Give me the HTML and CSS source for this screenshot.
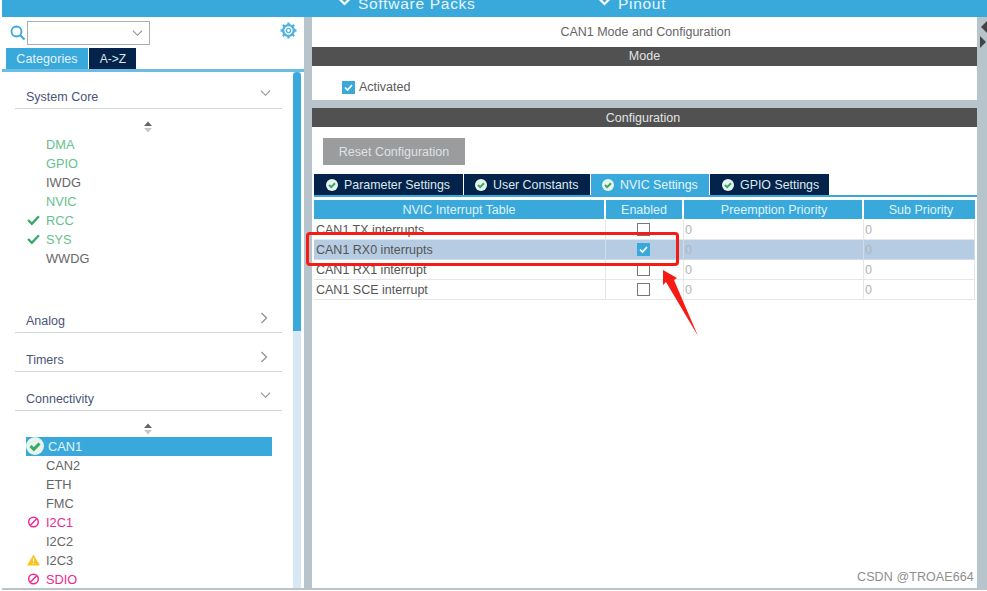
FILE: index.html
```html
<!DOCTYPE html>
<html lang="en">
<head>
  <meta charset="UTF-8">
  <meta name="viewport" content="width=device-width, initial-scale=1.0">
  <title>CAN1 Mode and Configuration</title>
  <link rel="stylesheet" href="styles.css">
</head>
<body>
  <svg class="defs" width="0" height="0">
    <symbol id="chev-down" viewBox="0 0 12 8"><path d="M1 1.500l5 5 5-5" fill="none" stroke="#8a8f94" stroke-width="1.200"/></symbol>
    <symbol id="chev-right" viewBox="0 0 8 12"><path d="M1.500 1l5 5-5 5" fill="none" stroke="#8a8f94" stroke-width="1.200"/></symbol>
    <symbol id="chev-top" viewBox="0 0 14 10"><path d="M1.500 1.500L7 7l5.500-5.500" fill="none" stroke="#fff" stroke-width="2.200"/></symbol>
    <symbol id="caret" viewBox="0 0 10 12"><path d="M5 0l4 4.500H1z" fill="#666"/><path d="M1 6.500h8L5 11z" fill="#c4c8cb"/></symbol>
    <symbol id="ok" viewBox="0 0 12 12"><circle cx="6" cy="6" r="6" fill="#e6f4ec"/><path d="M3 6l2.200 2.200L9 4.300" fill="none" stroke="#3aa76d" stroke-width="2"/></symbol>
    <symbol id="tick" viewBox="0 0 12 10"><path d="M1 5l3.500 3.500L11 1.500" fill="none" stroke="#3aa76d" stroke-width="2.200"/></symbol>
    <symbol id="ban" viewBox="0 0 12 12"><circle cx="6" cy="6" r="4.800" fill="none" stroke="#ec2a90" stroke-width="1.500"/><path d="M2.800 9.200l6.400-6.400" stroke="#ec2a90" stroke-width="1.500"/></symbol>
    <symbol id="warn" viewBox="0 0 14 12"><path d="M7 0l7 12H0z" fill="#fcc419"/><path d="M6.400 4h1.200v4H6.400zM6.400 9h1.200v1.300H6.400z" fill="#fff"/></symbol>
    <symbol id="box-on" viewBox="0 0 13 13"><rect width="13" height="13" fill="#39a9dc"/><path d="M3 6.500l2.500 2.500L10 4" fill="none" stroke="#fff" stroke-width="1.700"/></symbol>
  </svg>

  <header class="topbar">
    <span class="top-item top-packs"><svg class="top-chev"><use href="#chev-top"/></svg>Software Packs</span>
    <span class="top-item"><svg class="top-chev"><use href="#chev-top"/></svg>Pinout</span>
  </header>

  <div class="main">
    <aside class="sidebar">
      <div class="search-row">
        <svg class="search-icon" viewBox="0 0 16 16"><circle cx="6.500" cy="6.500" r="5" fill="none" stroke="#39a9dc" stroke-width="1.800"/><path d="M10.200 10.200l4.300 4.300" stroke="#39a9dc" stroke-width="2"/></svg>
        <div class="combo"><svg class="combo-chev"><use href="#chev-down"/></svg></div>
        <svg class="gear" viewBox="0 0 16 16"><circle cx="8" cy="8" r="5" fill="none" stroke="#4fb3e0" stroke-width="2.200"/><circle cx="8" cy="8" r="2" fill="none" stroke="#4fb3e0" stroke-width="1.200"/><path d="M8 0.500v2.500M8 13v2.500M0.500 8h2.500M13 8h2.500M2.700 2.700l1.800 1.800M11.500 11.500l1.800 1.800M2.700 13.300l1.800-1.800M11.500 4.500l1.800-1.800" stroke="#4fb3e0" stroke-width="2.200"/></svg>
      </div>
      <div class="side-tabs">
        <span class="side-tab side-tab-active">Categories</span>
        <span class="side-tab">A-&gt;Z</span>
      </div>
      <div class="side-body">
        <div class="cat-list">
          <div class="cat-head">System Core<svg class="chev-d"><use href="#chev-down"/></svg></div>
          <div class="cat-items cat-items-first">
            <svg class="caret"><use href="#caret"/></svg>
            <div class="item green">DMA</div>
            <div class="item green">GPIO</div>
            <div class="item">IWDG</div>
            <div class="item green">NVIC</div>
            <div class="item green"><svg class="item-icon"><use href="#tick"/></svg>RCC</div>
            <div class="item green"><svg class="item-icon"><use href="#tick"/></svg>SYS</div>
            <div class="item">WWDG</div>
          </div>
          <div class="cat-head">Analog<svg class="chev-r"><use href="#chev-right"/></svg></div>
          <div class="cat-head">Timers<svg class="chev-r"><use href="#chev-right"/></svg></div>
          <div class="cat-head">Connectivity<svg class="chev-d"><use href="#chev-down"/></svg></div>
          <div class="cat-items">
            <svg class="caret"><use href="#caret"/></svg>
            <div class="item selected"><svg class="item-icon-big"><use href="#ok"/></svg>CAN1</div>
            <div class="item">CAN2</div>
            <div class="item">ETH</div>
            <div class="item">FMC</div>
            <div class="item pink"><svg class="item-icon"><use href="#ban"/></svg>I2C1</div>
            <div class="item">I2C2</div>
            <div class="item"><svg class="item-icon"><use href="#warn"/></svg>I2C3</div>
            <div class="item pink"><svg class="item-icon"><use href="#ban"/></svg>SDIO</div>
          </div>
        </div>
        <div class="scroll-track"><div class="scroll-thumb"></div></div>
      </div>
    </aside>

    <section class="content">
      <div class="panel-title">CAN1 Mode and Configuration</div>
      <div class="bar">Mode</div>
      <div class="mode-box">
        <svg class="box"><use href="#box-on"/></svg>
        <span>Activated</span>
      </div>
      <div class="bar bar-config">Configuration</div>
      <div class="config-box">
        <button class="reset-btn">Reset Configuration</button>
        <div class="tabs">
          <span class="tab"><svg class="tab-icon"><use href="#ok"/></svg>Parameter Settings</span>
          <span class="tab"><svg class="tab-icon"><use href="#ok"/></svg>User Constants</span>
          <span class="tab tab-active"><svg class="tab-icon"><use href="#ok"/></svg>NVIC Settings</span>
          <span class="tab"><svg class="tab-icon"><use href="#ok"/></svg>GPIO Settings</span>
        </div>
        <table class="nvic">
          <thead>
            <tr>
              <th class="col-name">NVIC Interrupt Table</th>
              <th class="col-en">Enabled</th>
              <th class="col-pre">Preemption Priority</th>
              <th class="col-sub">Sub Priority</th>
            </tr>
          </thead>
          <tbody>
            <tr><td>CAN1 TX interrupts</td><td class="center"><span class="check"></span></td><td class="num">0</td><td class="num">0</td></tr>
            <tr class="row-sel"><td>CAN1 RX0 interrupts</td><td class="center"><svg class="box"><use href="#box-on"/></svg></td><td class="num">0</td><td class="num">0</td></tr>
            <tr><td>CAN1 RX1 interrupt</td><td class="center"><span class="check"></span></td><td class="num">0</td><td class="num">0</td></tr>
            <tr><td>CAN1 SCE interrupt</td><td class="center"><span class="check"></span></td><td class="num">0</td><td class="num">0</td></tr>
          </tbody>
        </table>
      </div>
    </section>

    <div class="right-strip">
      <span class="arrow-l"></span>
      <span class="arrow-r"></span>
    </div>
  </div>

  <!-- markup drawn on top of the screenshot -->
  <div class="red-box"></div>
  <svg class="red-arrow" viewBox="0 0 40 70"><path d="M3 2L17 10 14 12 38 68 6 14 3 17z" fill="#f41c14"/></svg>
  <div class="watermark">CSDN @TROAE664</div>
</body>
</html>
```

FILE: styles.css
```css
* {
  margin: 0;
  padding: 0;
  box-sizing: border-box;
}

html, body {
  width: 987px;
  height: 591px;
  overflow: hidden;
}

body {
  position: relative;
  font-family: "Liberation Sans", Arial, sans-serif;
  font-size: 13px;
  color: #5a5a5a;
  background: #fff;
}

.defs {
  position: absolute;
}

.topbar {
  height: 17px;
  margin-left: 2px;
  display: flex;
  align-items: flex-end;
  overflow: hidden;
  background: #39a9dc;
  color: #eaf5fb;
  font-size: 15.5px;
  letter-spacing: 0.7px;
}

.top-item {
  flex: none;
  height: 18px;
  line-height: 18px;
  margin-bottom: 4px;
  display: flex;
  align-items: center;
  white-space: nowrap;
}

.top-packs {
  margin-left: 335px;
  width: 260px;
}

.top-chev {
  width: 15px;
  height: 10px;
  margin-right: 6px;
  margin-top: -4px;
}

.main {
  display: flex;
  height: 573px;
  margin-left: 2px;
  background: #b8c4cb;
  border-bottom: 2px solid #b8c4cb;
}

/* left column */
.sidebar {
  width: 302px;
  flex: none;
  background: #fff;
  display: flex;
  flex-direction: column;
  overflow: hidden;
}

.search-row {
  height: 31px;
  display: flex;
  align-items: center;
  padding-left: 8px;
}

.search-icon {
  width: 16px;
  height: 16px;
  margin-right: 1px;
}

.combo {
  width: 123px;
  height: 24px;
  border: 1px solid #a9aeb2;
  display: flex;
  align-items: center;
  justify-content: flex-end;
  padding-right: 6px;
}

.combo-chev {
  width: 11px;
  height: 8px;
}

.gear {
  width: 17px;
  height: 17px;
  margin-left: 130px;
  margin-top: -4px;
}

.side-tabs {
  height: 21px;
  display: flex;
  gap: 1px;
  padding-left: 4px;
}

.side-tab {
  width: 47px;
  padding-left: 1px;
  background: #03234b;
  color: #dfe6ec;
  font-size: 12px;
  line-height: 22px;
  text-align: center;
}

.side-tab-active {
  width: 82px;
  padding-left: 0;
  background: #39a9dc;
  color: #e4f3fa;
  font-size: 12.5px;
  letter-spacing: 0.1px;
}

.side-body {
  flex: 1;
  min-height: 0;
  display: flex;
  border-top: 3px solid #6bbde3;
}

.cat-list {
  width: 291px;
  flex: none;
  padding: 13px 0 0 13px;
}

.cat-head {
  position: relative;
  width: 267px;
  height: 24px;
  margin-bottom: 15px;
  padding-left: 11px;
  line-height: 25px;
  font-size: 12.5px;
  color: #4a5578;
  border-bottom: 1px solid #ced6da;
}

.chev-d, .chev-r {
  position: absolute;
  top: 4px;
  right: 11px;
}

.chev-d {
  width: 11px;
  height: 8px;
}

.chev-r {
  width: 8px;
  height: 12px;
  top: 3px;
  right: 14px;
}

.cat-items {
  width: 246px;
  margin: -6px 0 0 11px;
}

.cat-items-first {
  margin-bottom: 41px;
}

.caret {
  display: block;
  width: 10px;
  height: 17px;
  margin-left: 117px;
  padding-top: 2px;
}

.item {
  display: flex;
  align-items: center;
  height: 19px;
  padding-left: 20px;
  padding-bottom: 1px;
  position: relative;
  font-size: 12.8px;
  color: #666;
}

.item-icon {
  position: absolute;
  left: 1px;
  top: 3px;
  width: 13px;
  height: 12px;
}

.item-icon-big {
  position: absolute;
  left: 0;
  top: 0;
  width: 18px;
  height: 18px;
}

.green {
  color: #66c18c;
}

.pink {
  color: #ec2a90;
}

.selected {
  background: #39a9dc;
  color: #e4f3fa;
  padding-left: 22px;
}

.scroll-track {
  width: 8px;
  flex: none;
  background: #d8e7f4;
}

.scroll-thumb {
  height: 259px;
  background: #39a9dc;
  border-radius: 4px 4px 0 0;
}

/* right column */
.content {
  width: 665px;
  margin-left: 8px;
  flex: none;
  display: flex;
  flex-direction: column;
}

.panel-title {
  height: 30px;
  padding-left: 2px;
  background: #fff;
  text-align: center;
  line-height: 30px;
  font-size: 12.5px;
  color: #666;
}

.bar {
  height: 19px;
  background: #505150;
  color: #e2e4e4;
  text-align: center;
  font-size: 12.5px;
  line-height: 19px;
}

.bar-config {
  line-height: 21px;
  padding-right: 3px;
}

.mode-box {
  height: 34px;
  margin-bottom: 8px;
  background: #fff;
  display: flex;
  align-items: center;
  gap: 4px;
  padding: 8px 0 0 30px;
  font-size: 12.5px;
}

.box {
  width: 13px;
  height: 13px;
  display: block;
}

.config-box {
  flex: 1;
  background: #fff;
  padding-top: 11px;
}

.reset-btn {
  display: block;
  width: 142px;
  height: 27px;
  margin-left: 11px;
  border: none;
  background: #9a9c9e;
  color: #dfe2e4;
  font: 12.5px "Liberation Sans", Arial, sans-serif;
}

.tabs {
  display: flex;
  gap: 1px;
  height: 23px;
  margin: 9px 0 3px 2px;
  border-bottom: 2px solid #39a9dc;
}

.tab {
  height: 21px;
  width: 149px;
  background: #03234b;
  color: #dfe6ec;
  display: flex;
  align-items: center;
  padding-left: 12px;
  font-size: 12.4px;
}

.tab:nth-child(2) {
  width: 126px;
  padding-left: 11px;
}

.tab:nth-child(3) {
  width: 118px;
  padding-left: 11px;
  background: #39a9dc;
  color: #e4f3fa;
}

.tab:nth-child(4) {
  width: 119px;
}

.tab-icon {
  width: 12px;
  height: 12px;
  margin-right: 6px;
}

.nvic {
  width: 661px;
  margin-left: 2px;
  table-layout: fixed;
  border-collapse: separate;
  border-spacing: 0;
  font-size: 12.5px;
}

.nvic th {
  height: 20px;
  background: #39a9dc;
  color: #dff1f9;
  font-weight: normal;
  border-right: 2px solid #fff;
  border-bottom: 1px solid #fff;
}

.col-name { width: 292px; }
.col-en { width: 78px; }
.col-pre { width: 180px; padding-left: 2px; }
.col-sub { width: 111px; padding-left: 3px; }

.nvic th:last-child {
  border-right: none;
}

.nvic td {
  height: 20px;
  padding-left: 2px;
  border-right: 1px solid #e3e7ea;
  border-bottom: 1px solid #e3e7ea;
  color: #555;
}

.nvic .center {
  padding-left: 0;
}

.center .box, .check {
  display: block;
  width: 13px;
  height: 13px;
  margin-left: 31px;
}

.check {
  border: 1px solid #777;
  background: #fff;
}

.nvic .num {
  color: #b0b4b7;
  padding-left: 1px;
}

.row-sel td {
  background: #b6cce3;
  border-color: #cfdcea;
}

.right-strip {
  flex: none;
  width: 10px;
  display: flex;
  flex-direction: column;
  align-items: flex-end;
  padding-top: 4px;
  gap: 3px;
}

.arrow-l, .arrow-r {
  width: 0;
  height: 0;
  border-top: 6px solid transparent;
  border-bottom: 6px solid transparent;
}

.arrow-l {
  border-right: 6px solid #444;
}

.arrow-r {
  border-left: 6px solid #444;
  margin-right: 1px;
}

.red-box {
  position: absolute;
  left: 306px;
  top: 232px;
  width: 373px;
  height: 34px;
  border: 3px solid #f41c14;
  border-radius: 4px;
}

.red-arrow {
  position: absolute;
  left: 660px;
  top: 268px;
  width: 40px;
  height: 70px;
}

.watermark {
  position: absolute;
  left: 857px;
  top: 570px;
  font-size: 12.5px;
  letter-spacing: 0.1px;
  color: #8e8e8e;
}
```
